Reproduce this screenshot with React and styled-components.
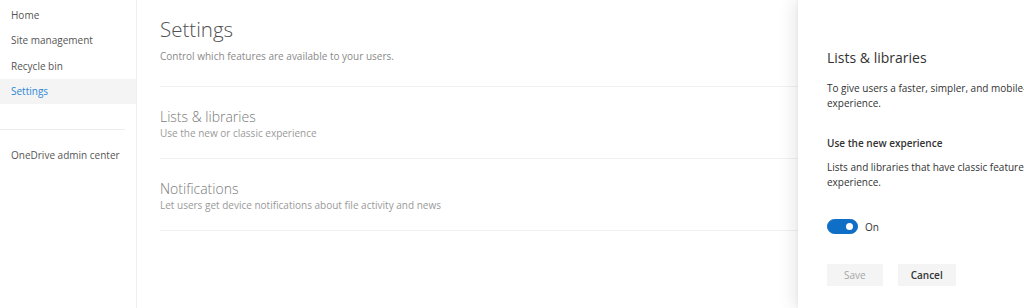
import React, { useState } from 'react';
import styled, { createGlobalStyle, css } from 'styled-components';

const GlobalStyle = createGlobalStyle`
  html, body {
    margin: 0;
    padding: 0;
    background: #fff;
  }
  body {
    font-family: "Segoe UI", "Open Sans", "Noto Sans", sans-serif;
    -webkit-font-smoothing: antialiased;
  }
`;

const Page = styled.div`
  position: relative;
  display: flex;
  height: 100vh;
  overflow: hidden;
  background: #fff;
`;

const Sidebar = styled.nav`
  width: 136px;
  flex-shrink: 0;
  border-right: 1px solid #efefef;
  padding-top: 2px;
  display: flex;
  flex-direction: column;
`;

const NavItem = styled.a`
  display: flex;
  align-items: center;
  height: 25.5px;
  padding-left: 11px;
  font-size: 10px;
  color: #555;
  text-decoration: none;
  cursor: pointer;

  ${props =>
    props.active &&
    css`
      background: #f4f4f4;
      color: #2b88d8;
    `}
`;

const NavDivider = styled.hr`
  border: 0;
  border-top: 1px solid #ededed;
  margin: 25px 11px 12px 0;
`;

const Main = styled.main`
  flex: 1;
  padding-left: 23px;
  min-width: 0;
`;

const Header = styled.header`
  padding-top: 14px;
  padding-bottom: 22px;
  border-bottom: 1px solid #f0f0f0;
`;

const Title = styled.h1`
  margin: 0;
  font-size: 20.5px;
  font-weight: 300;
  color: #505050;
  line-height: 30px;
`;

const Subtitle = styled.p`
  margin: 5px 0 0;
  font-size: 10px;
  color: #8a8a8a;
  line-height: 15px;
`;

const Section = styled.section`
  padding: 20px 0 18px;
  border-bottom: 1px solid #f0f0f0;
  cursor: pointer;
`;

const SectionTitle = styled.h2`
  margin: 0;
  font-size: 14px;
  font-weight: 300;
  color: #7a7a7a;
  line-height: 19px;
`;

const SectionText = styled.p`
  margin: 0;
  font-size: 10px;
  color: #9a9a9a;
  line-height: 14px;
`;

const Panel = styled.aside`
  position: absolute;
  top: 0;
  left: 798px;
  width: 420px;
  height: 100%;
  background: #fff;
  box-shadow: -6px 0 14px rgba(0, 0, 0, 0.08), -1px 0 3px rgba(0, 0, 0, 0.04);
  padding: 46px 29px 0;
  box-sizing: border-box;
`;

const PanelTitle = styled.h2`
  margin: 0;
  font-size: 14px;
  font-weight: 400;
  color: #333;
  line-height: 24px;
`;

const PanelText = styled.p`
  margin: ${props => props.gap || 0}px 0 0;
  font-size: 10px;
  color: #333;
  line-height: 14.5px;
`;

const Label = styled.h3`
  margin: 25px 0 0;
  font-size: 10px;
  font-weight: 600;
  color: #333;
  line-height: 16px;
`;

const ToggleRow = styled.label`
  display: flex;
  align-items: center;
  gap: 7px;
  margin-top: 30px;
  font-size: 10px;
  color: #333;
  cursor: pointer;
`;

const Track = styled.span`
  position: relative;
  width: 31px;
  height: 15px;
  border-radius: 8px;
  box-sizing: border-box;
  background: ${props => (props.on ? '#0f6fc6' : '#fff')};
  border: 1px solid ${props => (props.on ? '#0f6fc6' : '#666')};
`;

const Knob = styled.span`
  position: absolute;
  top: 3px;
  left: ${props => (props.on ? '18px' : '3px')};
  width: 7px;
  height: 7px;
  border-radius: 50%;
  background: ${props => (props.on ? '#fff' : '#666')};
`;

const Actions = styled.div`
  display: flex;
  gap: 15px;
  margin-top: 30px;
`;

const Button = styled.button`
  height: 22px;
  padding: 0 ${props => props.pad}px;
  border: 0;
  background: #f4f4f4;
  font-family: inherit;
  font-size: 10px;
  font-weight: ${props => (props.disabled ? 400 : 600)};
  color: ${props => (props.disabled ? '#a6a6a6' : '#333')};
  cursor: ${props => (props.disabled ? 'default' : 'pointer')};
`;

const navItems = ['Home', 'Site management', 'Recycle bin', 'Settings'];

const sections = [
  { title: 'Lists & libraries', text: 'Use the new or classic experience' },
  { title: 'Notifications', text: 'Let users get device notifications about file activity and news' },
];

const App = () => {
  const [on, setOn] = useState(true);

  return (
    <>
      <GlobalStyle />
      <Page>
        <Sidebar>
          {navItems.map(item => (
            <NavItem key={item} active={item === 'Settings'}>
              {item}
            </NavItem>
          ))}
          <NavDivider />
          <NavItem>OneDrive admin center</NavItem>
        </Sidebar>

        <Main>
          <Header>
            <Title>Settings</Title>
            <Subtitle>Control which features are available to your users.</Subtitle>
          </Header>
          {sections.map(s => (
            <Section key={s.title}>
              <SectionTitle>{s.title}</SectionTitle>
              <SectionText>{s.text}</SectionText>
            </Section>
          ))}
        </Main>

        <Panel>
          <PanelTitle>Lists &amp; libraries</PanelTitle>
          <PanelText gap={11}>
            To give users a faster, simpler, and mobile-friendly list and library
            <br />
            experience.
          </PanelText>
          <Label>Use the new experience</Label>
          <PanelText gap={9}>
            Lists and libraries that have classic features open in the classic
            <br />
            experience.
          </PanelText>
          <ToggleRow onClick={() => setOn(!on)}>
            <Track on={on}>
              <Knob on={on} />
            </Track>
            {on ? 'On' : 'Off'}
          </ToggleRow>
          <Actions>
            <Button pad={17} disabled>Save</Button>
            <Button pad={13}>Cancel</Button>
          </Actions>
        </Panel>
      </Page>
    </>
  );
};

export default App;
